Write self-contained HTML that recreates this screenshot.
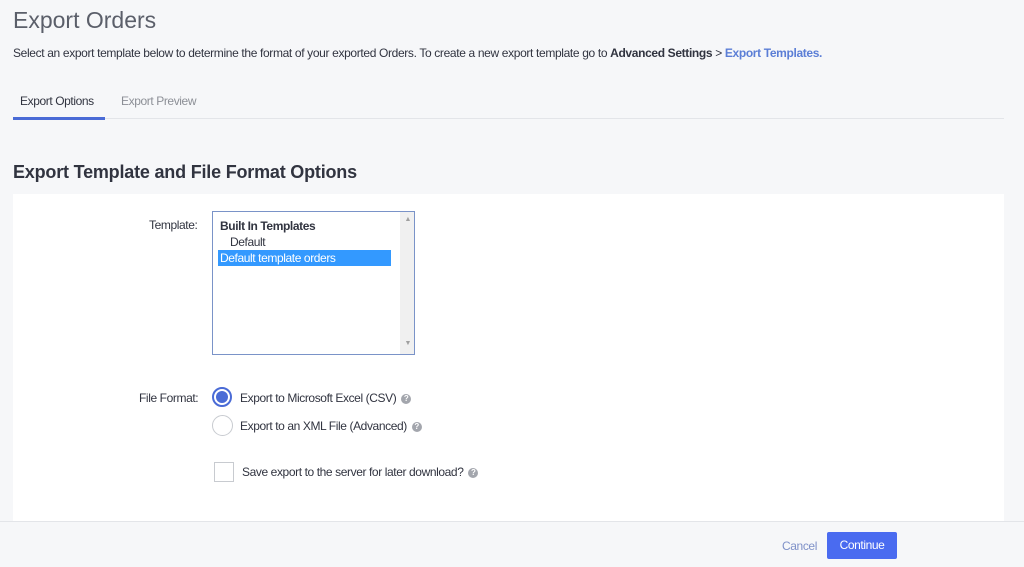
<!DOCTYPE html>
<html><head><style>
body{margin:0;width:1024px;height:566px;background:#f6f7f9;font-family:"Liberation Sans",sans-serif;color:#313440;position:relative;overflow:hidden}
.a{position:absolute;white-space:nowrap;letter-spacing:-0.4px}
.q{display:inline-block;width:10px;height:10px;border-radius:50%;background:#a3a6ad;color:#fff;font-size:8px;line-height:10px;text-align:center;font-weight:bold;vertical-align:middle;margin-left:5px;letter-spacing:0}
</style></head><body>
<div class="a" style="left:13px;top:7px;font-size:23px;color:#5b5f6a;font-weight:300;letter-spacing:0">Export Orders</div>
<div class="a" style="left:13px;top:46px;font-size:12px;letter-spacing:-0.35px">Select an export template below to determine the format of your exported Orders. To create a new export template go to <b>Advanced Settings</b> &gt; <b style="color:#5b7ed6">Export Templates.</b></div>
<div class="a" style="left:20px;top:94px;font-size:12px">Export Options</div>
<div class="a" style="left:121px;top:94px;font-size:12px;color:#8c8f96">Export Preview</div>
<div class="a" style="left:13px;top:118px;width:991px;height:1px;background:#e3e5e9"></div>
<div class="a" style="left:13px;top:117px;width:92px;height:3px;background:#4a6bd6"></div>
<div class="a" style="left:13px;top:162px;font-size:18px;font-weight:bold;color:#313440;letter-spacing:-0.2px">Export Template and File Format Options</div>
<div class="a" style="left:13px;top:194px;width:991px;height:340px;background:#fff"></div>
<div class="a" style="left:149px;top:218px;font-size:12px">Template:</div>
<div class="a" style="left:212px;top:211px;width:201px;height:142px;border:1px solid #7a93c8;background:#fff">
 <div class="a" style="right:0;top:0;width:14px;height:142px;background:#f0f0f0"></div>
 <div class="a" style="right:3px;top:4px;font-size:7px;color:#a0a0a0">▲</div>
 <div class="a" style="right:3px;top:128px;font-size:7px;color:#a0a0a0">▼</div>
 <div class="a" style="left:7px;top:7px;font-size:12px;font-weight:bold">Built In Templates</div>
 <div class="a" style="left:17px;top:23px;font-size:12px">Default</div>
 <div class="a" style="left:5px;top:38px;width:173px;height:16px;background:#3399ff;color:#fff;font-size:12px;line-height:16px;padding-left:2px;box-sizing:border-box">Default template orders</div>
</div>
<div class="a" style="left:139px;top:391px;font-size:12px">File Format:</div>
<div class="a" style="left:212px;top:387px;width:16px;height:16px;border:2px solid #4a6bd6;border-radius:50%;box-sizing:content-box"><div style="margin:2px;width:12px;height:12px;border-radius:50%;background:#4a6bd6"></div></div>
<div class="a" style="left:240px;top:391px;font-size:12px">Export to Microsoft Excel (CSV)<span class="q">?</span></div>
<div class="a" style="left:212px;top:415px;width:19px;height:19px;border:1px solid #c8cbd0;border-radius:50%"></div>
<div class="a" style="left:240px;top:419px;font-size:12px">Export to an XML File (Advanced)<span class="q">?</span></div>
<div class="a" style="left:214px;top:462px;width:18px;height:18px;border:1px solid #c8cbd0"></div>
<div class="a" style="left:242px;top:465px;font-size:12px">Save export to the server for later download?<span class="q">?</span></div>
<div class="a" style="left:0;top:521px;width:1024px;height:45px;background:#f6f7f9;border-top:1px solid #e3e5e9"></div>
<div class="a" style="left:782px;top:539px;font-size:12px;color:#7f91c8">Cancel</div>
<div class="a" style="left:827px;top:532px;width:70px;height:27px;background:#4a6bf0;border-radius:2px;color:#fff;font-size:12px;line-height:27px;text-align:center">Continue</div>
</body></html>
